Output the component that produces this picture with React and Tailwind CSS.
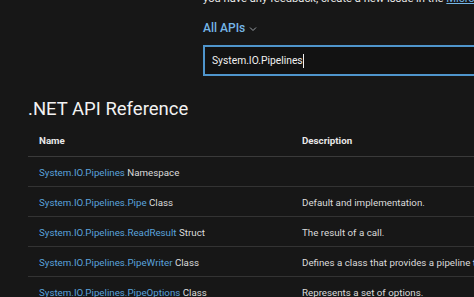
import React from "react";

const rows = [
  ["System.IO.Pipelines", "Namespace", ""],
  ["System.IO.Pipelines.Pipe", "Class", "Default and implementation."],
  ["System.IO.Pipelines.ReadResult", "Struct", "The result of a call."],
  ["System.IO.Pipelines.PipeWriter", "Class", "Defines a class that provides a pipeline to which data can be written."],
  ["System.IO.Pipelines.PipeOptions", "Class", "Represents a set of options."],
];

export default function App() {
  return (
    <div
      className="w-[474px] h-[297px] overflow-hidden bg-[#171717] text-[#e6e6e6]"
      style={{ fontFamily: 'Roboto, "Open Sans", sans-serif' }}
    >
      <div className="ml-[203px] w-[420px] -mt-[9px]">
        <p className="text-[11.2px] leading-[16px] whitespace-nowrap text-[#e6e6e6]">
          you have any feedback, create a new issue in the{" "}
          <span className="text-[#75b6e7] underline">Microsoft Docs repo</span>
        </p>
        <div className="mt-[13px] flex items-center gap-[4px] text-[#75b6e7] text-[12px] leading-[16px] font-medium">
          <span>All APIs</span>
          <svg width="8" height="6" viewBox="0 0 8 6" fill="none" className="mt-[2px]">
            <path d="M1 1.5 L4 4.5 L7 1.5" stroke="#9aa0a6" strokeWidth="1" />
          </svg>
        </div>
        <div className="mt-[9px] h-[31px] border-2 border-[#4f95cc] bg-[#121212] flex items-center pl-[7px] text-[10.3px] text-[#f0f0f0]">
          <span>System.IO.Pipelines</span>
          <span className="w-px h-[14px] bg-[#f0f0f0]" />
        </div>
      </div>

      <h1 className="ml-[28px] mt-[20px] text-[18.5px] leading-[26px] text-[#f2f2f2] font-normal">
        .NET API Reference
      </h1>

      <div className="ml-[28px] mt-[5px] w-[600px] text-[9.75px]">
        <div className="grid grid-cols-[263px_1fr] h-[30px] items-center px-[11px] border-b border-[#3a3a3a] font-bold text-[#e8e8e8]">
          <span>Name</span>
          <span>Description</span>
        </div>
        {rows.map(([link, kind, desc], i) => (
          <div
            key={i}
            className="grid grid-cols-[263px_1fr] h-[30px] items-center pt-[3px] px-[11px] border-b border-[#333333]"
          >
            <span className="whitespace-nowrap">
              <span className="text-[#5aa2dc]">{link}</span>{" "}
              <span className="text-[#dcdcdc]">{kind}</span>
            </span>
            <span className="whitespace-nowrap text-[#dcdcdc]">{desc}</span>
          </div>
        ))}
      </div>
    </div>
  );
}
